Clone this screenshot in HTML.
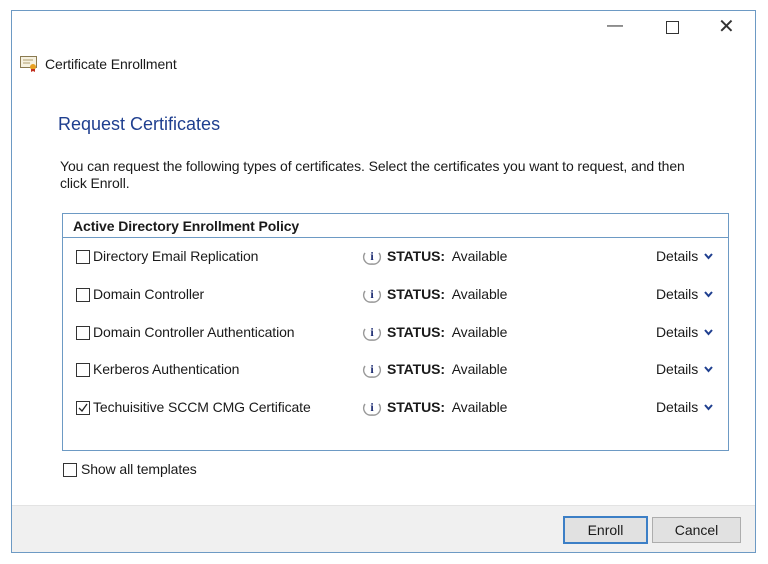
<!DOCTYPE html>
<html><head><style>
body{margin:0;width:768px;height:564px;background:#fff;font-family:"Liberation Sans",sans-serif;color:#1a1a1a;position:relative;overflow:hidden}
.win{position:absolute;left:11px;top:10px;width:743px;height:541px;border:1px solid #6d9ac4;background:#fff;overflow:hidden}
.a{position:absolute;white-space:nowrap}
.t{font-size:14px;letter-spacing:-0.1px}
.cb{position:absolute;width:12px;height:12px;border:1px solid #333;background:#fff}
.box{position:absolute;left:50px;top:202px;width:665px;height:236px;border:1px solid #6d9ac4}
.foot{position:absolute;left:0;top:494px;width:743px;height:49px;background:#f0f0f0;border-top:1px solid #e3e3e3}
.btn{position:absolute;top:11px;height:24px;font-size:14px;text-align:center;line-height:24px;background:#e1e1e1;border:1px solid #adadad}
</style></head><body>
<div class="win">
<div class="a" style="left:595px;top:6px;font-size:16px;color:#333">—</div>
<div class="a" style="left:654px;top:10px;width:11px;height:11px;border:1px solid #333"></div>
<div class="a" style="left:706px;top:3px;font-size:20px;color:#333">✕</div>
<svg class="a" style="left:8px;top:45px" width="18" height="16" viewBox="0 0 18 16"><rect x="0.5" y="0.5" width="16" height="11" fill="#f6f1e0" stroke="#8a7a50"/><line x1="3" y1="4" x2="13" y2="4" stroke="#b0a070"/><line x1="3" y1="7" x2="10" y2="7" stroke="#b0a070"/><circle cx="13" cy="11" r="3" fill="#e8a020"/><path d="M11 13 L11 16 L13 15 L15 16 L15 13" fill="#c03020"/></svg>
<div class="a t" style="left:33px;top:45px">Certificate Enrollment</div>
<div class="a" style="left:46px;top:103px;font-size:18px;color:#1f3f8f">Request Certificates</div>
<div class="a t" style="left:48px;top:147px;line-height:17px">You can request the following types of certificates. Select the certificates you want to request, and then<br>click Enroll.</div>
<div class="box">
<div class="a t" style="left:10px;top:4px;font-weight:bold">Active Directory Enrollment Policy</div>
<div class="a" style="left:0;top:23px;width:665px;border-top:1px solid #6d9ac4"></div>
</div>
<div id="rows"></div>
<div class="cb" style="left:51px;top:452px"></div>
<div class="a t" style="left:69px;top:450px">Show all templates</div>
<div class="foot">
<div class="btn" style="left:551px;width:81px;border:2px solid #3c7fc6;top:10px">Enroll</div>
<div class="btn" style="left:640px;width:87px">Cancel</div>
</div>
</div>
<script>
var names=["Directory Email Replication","Domain Controller","Domain Controller Authentication","Kerberos Authentication","Techuisitive SCCM CMG Certificate"];
var h="";
names.forEach(function(n,i){var y=237+i*37.8;
h+='<div class="cb" style="left:64px;top:'+(y+2)+'px">'+(i==4?'<svg width="12" height="12" style="position:absolute;left:0;top:0"><path d="M2 6 L5 9 L10 2" stroke="#222" stroke-width="1.3" fill="none"/></svg>':'')+'</div>';
h+='<div class="a t" style="left:81px;top:'+y+'px">'+n+'</div>';
h+='<svg class="a" style="left:350px;top:'+(y-1)+'px" width="20" height="20" viewBox="0 0 20 20"><path d="M3 6 A7 7 0 0 0 10 17 A7 7 0 0 0 17 6" stroke="#999" stroke-width="1.5" fill="none"/><text x="10" y="13" font-size="12" font-weight="bold" text-anchor="middle" fill="#1a2a70" font-family="Liberation Serif">i</text></svg>';
h+='<div class="a t" style="left:375px;top:'+y+'px"><b>STATUS:</b>&nbsp; Available</div>';
h+='<div class="a t" style="left:644px;top:'+y+'px">Details</div>';
h+='<svg class="a" style="left:692px;top:'+(y+5)+'px" width="9" height="7" viewBox="0 0 9 7"><path d="M1 1 L4.5 5 L8 1" stroke="#1f3f8f" stroke-width="2" fill="none"/></svg>';});
document.getElementById("rows").innerHTML=h;
</script>
</body></html>
